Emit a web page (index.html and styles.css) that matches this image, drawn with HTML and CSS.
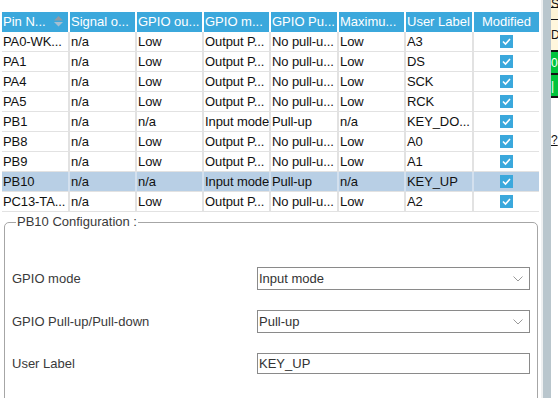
FILE: index.html
```html
<!DOCTYPE html>
<html lang="en">
<head>
    <meta charset="UTF-8" />
    <title>Pin Configuration</title>
    <link rel="stylesheet" href="styles.css">
</head>
<body>
    <div class="window">
        <div class="main">
            <!-- PIN TABLE -->
            <table class="pins">
                <colgroup>
                    <col class="w68"><col class="w67"><col class="w67"><col class="w67">
                    <col class="w68"><col class="w67"><col class="w68"><col class="w65">
                </colgroup>
                <thead>
                    <tr>
                        <th>Pin N...
                            <svg class="sort" width="9" height="11" viewBox="0 0 9 11">
                                <polygon points="4.5,0 9,4.5 0,4.5" fill="#8e9ba6"/>
                                <polygon points="0,6 9,6 4.5,10.5" fill="#a6bfd1"/>
                            </svg>
                        </th>
                        <th>Signal o...</th>
                        <th>GPIO ou...</th>
                        <th>GPIO m...</th>
                        <th>GPIO Pu...</th>
                        <th>Maximu...</th>
                        <th>User Label</th>
                        <th class="center">Modified</th>
                    </tr>
                </thead>
                <tbody id="rows"></tbody>
            </table>

            <!-- CONFIGURATION -->
            <fieldset class="config">
                <legend>PB10 Configuration :</legend>
                <div class="field">
                    <label>GPIO mode</label>
                    <div class="combo">
                        <span>Input mode</span>
                        <svg width="10" height="6" viewBox="0 0 10 6"><polyline points="0.5,0.5 5,5 9.5,0.5" fill="none" stroke="#9a9a9a" stroke-width="1"/></svg>
                    </div>
                </div>
                <div class="field">
                    <label>GPIO Pull-up/Pull-down</label>
                    <div class="combo">
                        <span>Pull-up</span>
                        <svg width="10" height="6" viewBox="0 0 10 6"><polyline points="0.5,0.5 5,5 9.5,0.5" fill="none" stroke="#9a9a9a" stroke-width="1"/></svg>
                    </div>
                </div>
                <div class="field">
                    <label>User Label</label>
                    <input type="text" class="text" value="KEY_UP">
                </div>
            </fieldset>
        </div>

        <div class="scroll"></div>

        <div class="side">
            <div class="side-head">SA</div>
            <div class="side-band"></div>
            <div class="side-cell">D</div>
            <div class="side-on">0-</div>
            <div class="side-on">|</div>
            <div class="side-help">?</div>
        </div>
    </div>

    <script>
        const pins = [
            ["PA0-WK...", "n/a", "Low", "Output P...", "No pull-u...", "Low", "A3"],
            ["PA1", "n/a", "Low", "Output P...", "No pull-u...", "Low", "DS"],
            ["PA4", "n/a", "Low", "Output P...", "No pull-u...", "Low", "SCK"],
            ["PA5", "n/a", "Low", "Output P...", "No pull-u...", "Low", "RCK"],
            ["PB1", "n/a", "n/a", "Input mode", "Pull-up", "n/a", "KEY_DO..."],
            ["PB8", "n/a", "Low", "Output P...", "No pull-u...", "Low", "A0"],
            ["PB9", "n/a", "Low", "Output P...", "No pull-u...", "Low", "A1"],
            ["PB10", "n/a", "n/a", "Input mode", "Pull-up", "n/a", "KEY_UP"],
            ["PC13-TA...", "n/a", "Low", "Output P...", "No pull-u...", "Low", "A2"]
        ];

        const tbody = document.getElementById('rows');
        pins.forEach(pin => {
            const tr = document.createElement('tr');
            if (pin[0] === 'PB10') tr.className = 'selected';
            tr.innerHTML = pin.map(v => `<td>${v}</td>`).join('') +
                `<td class="center"><span class="check"><svg width="13" height="13" viewBox="0 0 13 13"><polyline points="3,6.5 5.5,9 10,4" fill="none" stroke="#fff" stroke-width="1.6"/></svg></span></td>`;
            tbody.appendChild(tr);
        });
    </script>
</body>
</html>
```

FILE: styles.css
```css
* {
    margin: 0;
    padding: 0;
    box-sizing: border-box;
}

body {
    font-family: "Liberation Sans", Arial, sans-serif;
    font-size: 13px;
    color: #111;
    background: white;
    overflow: hidden;
}

.window {
    display: flex;
    height: 398px;
    overflow: hidden;
}

.main {
    width: 541px;
    flex-shrink: 0;
    padding-top: 12px;
}

/* table */

.pins {
    margin-left: 2px;
    width: 537px;
    table-layout: fixed;
    border-collapse: separate;
    border-spacing: 0;
}

.w65 { width: 65px; }
.w67 { width: 67px; }
.w68 { width: 68px; }

.pins th, .pins td {
    white-space: nowrap;
    overflow: hidden;
    text-align: left;
    padding: 0 1px;
}

.pins th {
    background: #3ba8dc;
    color: white;
    font-weight: normal;
    line-height: 20px;
    border-right: 2px solid white;
}

.pins td {
    line-height: 19px;
    letter-spacing: -0.1px;
    border-right: 2px solid #e2e2e2;
    border-bottom: 1px solid #e2e2e2;
}

.pins th:last-child, .pins td:last-child {
    border-right: none;
}

.pins .center {
    text-align: center;
}

.sort {
    float: right;
    margin: 4px 4px 0 0;
}

.selected td {
    background: #b8cfe5;
    border-right-color: #d3e0ee;
}

.check {
    display: inline-block;
    width: 13px;
    height: 13px;
    background: #3ba8dc;
    vertical-align: middle;
    margin-top: -2px;
}

.check svg {
    display: block;
}

/* configuration */

.config {
    margin: 2px 0 0 4px;
    width: 534px;
    height: 240px;
    border: 1px solid #a6a6a6;
    border-radius: 5px;
    padding: 37px 7px 0 7px;
    display: flex;
    flex-direction: column;
    gap: 20px;
}

.config legend {
    margin-left: 4px;
    padding: 0 1px;
    line-height: 16px;
    color: #3a3a3a;
}

.field {
    display: flex;
    align-items: center;
}

.field label {
    width: 245px;
    color: #3a3a3a;
}

.combo {
    width: 273px;
    height: 23px;
    border: 1px solid #8a8a8a;
    padding: 0 6px 0 1px;
    display: flex;
    align-items: center;
    justify-content: space-between;
    color: #333;
}

.text {
    width: 273px;
    height: 21px;
    border: 1px solid #8a8a8a;
    padding: 0 1px;
    font-family: "Liberation Sans", Arial, sans-serif;
    font-size: 13px;
    color: #333;
    outline: none;
}

/* right edge */

.scroll {
    width: 10px;
    flex-shrink: 0;
    background: #b9c6cd;
    border-left: 2px solid #eef0f1;
}

.side {
    width: 7px;
    flex-shrink: 0;
    overflow: hidden;
    font-size: 12px;
    white-space: nowrap;
}

.side-head {
    height: 8px;
    line-height: 8px;
    background: #fcf3d6;
    border-bottom: 1px solid #111;
    overflow: hidden;
}

.side-band {
    height: 12px;
    background: #fcf3d6;
    border-bottom: 1px solid #111;
}

.side-cell {
    height: 32px;
    line-height: 30px;
    background: #fff7dd;
    border-bottom: 2px solid #111;
}

.side-on {
    height: 23px;
    line-height: 22px;
    background: #00c33c;
    color: white;
    border-bottom: 2px solid #111;
}

.side-help {
    margin-top: 36px;
    line-height: 12px;
    text-decoration: underline;
}
```
